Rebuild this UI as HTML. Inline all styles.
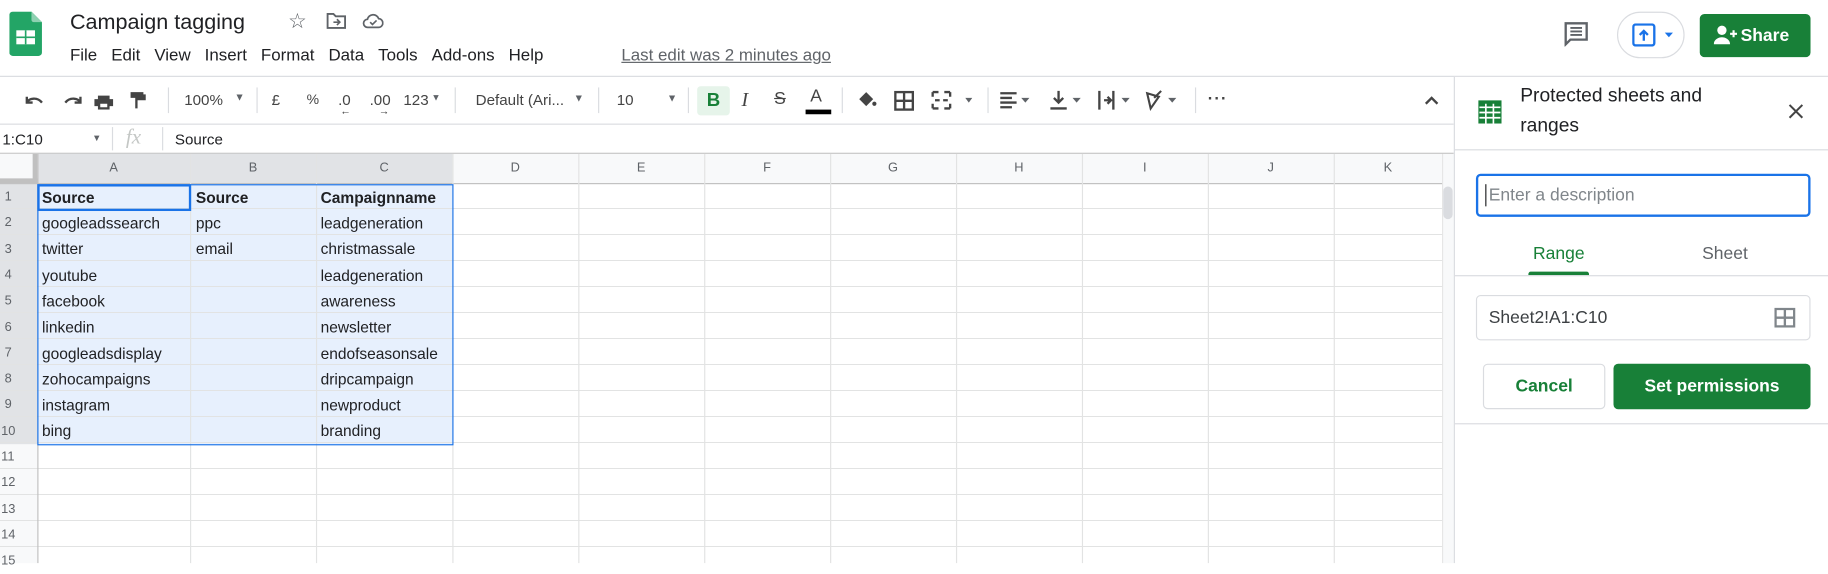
<!DOCTYPE html>
<html><head><meta charset="utf-8"><style>
*{box-sizing:border-box;margin:0;padding:0}
html,body{width:1828px;height:563px;overflow:hidden;background:#fff}
#w{position:absolute;left:0;top:0;width:1568px;height:483px;transform:scale(1.16582);transform-origin:0 0;font-family:"Liberation Sans",Arial,sans-serif;color:#202124}
.a{position:absolute}
.menu span{margin-right:12px}
.ti{color:#444;font-size:13px}
.vl{position:absolute;top:132px;width:1px;height:351px;background:#e2e3e3}
.c{position:absolute;font-size:13.3px;line-height:22px;white-space:nowrap}
.rn{position:absolute;left:0;width:32px;padding-left:4px;font-size:11px;color:#5f6368;line-height:22px}
.ch{position:absolute;top:132px;height:25px;line-height:25px;font-size:11px;color:#5f6368;text-align:center}
.sep{position:absolute;top:75px;width:1px;height:22px;background:#dadce0}
</style></head><body><div id="w">
<!-- logo -->
<svg class="a" style="left:8px;top:10px" width="28" height="38" viewBox="0 0 28 38"><path d="M3 0h16l9 9v26a3 3 0 0 1-3 3H3a3 3 0 0 1-3-3V3a3 3 0 0 1 3-3z" fill="#23a566"/><path d="M19 0l9 9h-7a2 2 0 0 1-2-2z" fill="#8ed1b1"/><rect x="6" y="16" width="16" height="12" fill="#fff"/><rect x="13.3" y="16" width="1.4" height="12" fill="#23a566"/><rect x="6" y="21.3" width="16" height="1.4" fill="#23a566"/></svg>
<div class="a" style="left:60px;top:8px;font-size:18.5px">Campaign tagging</div>
<div class="a" style="left:247px;top:8px;font-size:18px;color:#5f6368">☆</div>
<svg class="a" style="left:280px;top:11px" width="17" height="14" viewBox="0 0 17 14"><path d="M1 1h5l2 2h8v10H1z" fill="none" stroke="#5f6368" stroke-width="1.6"/><path d="M6 8h5M9 5.5l2.5 2.5L9 10.5" fill="none" stroke="#5f6368" stroke-width="1.4"/></svg>
<svg class="a" style="left:311px;top:11px" width="18" height="14" viewBox="0 0 18 14"><path d="M4.5 12.5a3.5 3.5 0 0 1-.3-7A5 5 0 0 1 13.8 5a3.7 3.7 0 0 1-.3 7.5z" fill="none" stroke="#5f6368" stroke-width="1.5"/><path d="M6.5 8l2 2 3.5-3.5" fill="none" stroke="#5f6368" stroke-width="1.4"/></svg>
<div class="a menu" style="left:60px;top:39px;font-size:14.5px;line-height:18px"><span>File</span><span>Edit</span><span>View</span><span>Insert</span><span>Format</span><span>Data</span><span>Tools</span><span>Add-ons</span><span>Help</span></div>
<div class="a" style="left:533px;top:39px;font-size:14.5px;line-height:18px;color:#5f6368;text-decoration:underline">Last edit was 2 minutes ago</div>
<!-- right top -->
<svg class="a" style="left:1341px;top:18px" width="22" height="22" viewBox="0 0 22 22"><path d="M2 2h18v14H6l-4 4z" fill="none" stroke="#5f6368" stroke-width="2"/><path d="M6 6h10M6 9h10M6 12h10" stroke="#5f6368" stroke-width="1.6"/></svg>
<div class="a" style="left:1387px;top:10px;width:58px;height:40px;border:1px solid #dadce0;border-radius:20px"></div>
<svg class="a" style="left:1400px;top:20px" width="36" height="20" viewBox="0 0 36 20"><rect x="1" y="1" width="18" height="18" rx="2" fill="none" stroke="#1a73e8" stroke-width="2"/><path d="M10 15V7M6.5 10L10 6.5 13.5 10" fill="none" stroke="#1a73e8" stroke-width="2"/><path d="M28 8h7l-3.5 4z" fill="#1a73e8"/></svg>
<div class="a" style="left:1458px;top:12px;width:95px;height:37px;background:#188038;border-radius:4px;color:#fff;font-size:15px;font-weight:bold;line-height:37px;padding-left:35px">Share</div>
<svg class="a" style="left:1470px;top:21px" width="20" height="18" viewBox="0 0 20 18"><circle cx="7" cy="5" r="4" fill="#fff"/><path d="M0 17c0-4 4-6 7-6s7 2 7 6z" fill="#fff"/><path d="M14 8h6M17 5v6" stroke="#fff" stroke-width="1.8"/></svg>
<div class="a" style="left:0;top:65px;width:1568px;height:1px;background:#dadce0"></div>
<!-- toolbar -->
<svg class="a" style="left:20px;top:78px" width="116" height="16" viewBox="0 0 116 16"><path d="M3 5v5h5M3 10c2-4 9-5 13 0" fill="none" stroke="#444" stroke-width="2"/><path d="M49 5v5h-5M49 10c-2-4-9-5-13 0" fill="none" stroke="#444" stroke-width="2"/><path d="M64 4h10v3H64z M61 7h16v6h-3v3H64v-3h-3z" fill="#444"/><rect x="66" y="11" width="6" height="3" fill="#fff"/><path d="M92 1h11v5H92z M103 3h2v5h-7v7h-2V6h7V5" fill="#444"/></svg>
<div class="sep" style="left:144px"></div>
<div class="a ti" style="left:158px;top:78px">100%</div><div class="a" style="left:201px;top:78px;font-size:9px;color:#5f6368">▼</div>
<div class="sep" style="left:220px"></div>
<div class="a ti" style="left:233px;top:78px">£</div>
<div class="a ti" style="left:263px;top:78px;font-size:12px">%</div>
<div class="a ti" style="left:290px;top:78px">.0</div><div class="a" style="left:292px;top:90px;font-size:9px;color:#444">←</div>
<div class="a ti" style="left:317px;top:78px">.00</div><div class="a" style="left:325px;top:90px;font-size:9px;color:#444">→</div>
<div class="a ti" style="left:346px;top:78px">123</div><div class="a" style="left:370px;top:79px;font-size:8px;color:#5f6368">▼</div>
<div class="sep" style="left:390px"></div>
<div class="a ti" style="left:408px;top:78px">Default (Ari...</div><div class="a" style="left:492px;top:79px;font-size:9px;color:#5f6368">▼</div>
<div class="sep" style="left:513px"></div>
<div class="a ti" style="left:529px;top:78px">10</div><div class="a" style="left:572px;top:79px;font-size:9px;color:#5f6368">▼</div>
<div class="sep" style="left:590px"></div>
<div class="a" style="left:598px;top:74px;width:28px;height:25px;background:#e6f4ea;border-radius:3px;color:#188038;font-weight:bold;font-size:16px;text-align:center;line-height:25px">B</div>
<div class="a" style="left:636px;top:76px;font-size:17px;font-style:italic;color:#444;font-family:'Liberation Serif',serif">I</div>
<div class="a" style="left:664px;top:76px;font-size:15px;color:#444;text-decoration:line-through">S</div>
<div class="a" style="left:695px;top:74px;font-size:15px;color:#444">A</div>
<div class="a" style="left:691px;top:94px;width:22px;height:4px;background:#000"></div>
<div class="sep" style="left:722px"></div>
<svg class="a" style="left:734px;top:76px" width="100" height="20" viewBox="0 0 100 20"><path d="M3 9l6-6 6 6-6 6z" fill="#444"/><circle cx="16" cy="13" r="1.8" fill="#444"/><rect x="34" y="3" width="15" height="15" fill="none" stroke="#444" stroke-width="2"/><path d="M41.5 3v15M34 10.5h15" stroke="#444" stroke-width="2"/><path d="M66 3h5M66 3v4M81 3h-5M81 3v4M66 17h5M66 17v-4M81 17h-5M81 17v-4M68 10h4M75 10h4" stroke="#444" stroke-width="2" fill="none"/><path d="M94 8h6l-3 4z" fill="#5f6368"/></svg>
<div class="sep" style="left:847px"></div>
<svg class="a" style="left:856px;top:76px" width="170" height="20" viewBox="0 0 170 20"><path d="M2 4h14M2 8h10M2 12h14M2 16h10" stroke="#444" stroke-width="2"/><path d="M20 8h7l-3.5 4z" fill="#5f6368"/><path d="M52 2v10M48 8l4 4 4-4M45 17h14" stroke="#444" stroke-width="2" fill="none"/><path d="M64 8h7l-3.5 4z" fill="#5f6368"/><path d="M87 2v16M99 2v16M91 10h6M94 7l3 3-3 3" stroke="#444" stroke-width="2" fill="none"/><path d="M106 8h7l-3.5 4z" fill="#5f6368"/><path d="M128 4l10 3-7 10z M134 8l6 -6" stroke="#444" stroke-width="1.8" fill="none"/><path d="M146 8h7l-3.5 4z" fill="#5f6368"/></svg>
<div class="sep" style="left:1025px"></div>
<div class="a" style="left:1036px;top:76px;font-size:14px;color:#444;font-weight:bold;letter-spacing:1px">···</div>
<svg class="a" style="left:1221px;top:81px" width="14" height="10" viewBox="0 0 14 10"><path d="M2 8l5-5 5 5" stroke="#444" stroke-width="2" fill="none"/></svg>
<div class="a" style="left:0;top:106px;width:1247px;height:1px;background:#dadce0"></div>
<!-- formula bar -->
<div class="a" style="left:2px;top:112px;font-size:13px">1:C10</div>
<div class="a" style="left:79px;top:114px;font-size:8px;color:#5f6368">▼</div>
<div class="a" style="left:96px;top:109px;width:1px;height:20px;background:#dadce0"></div>
<div class="a" style="left:108px;top:107px;font-size:18px;color:#c4c7c5;font-style:italic;font-family:'Liberation Serif',serif">fx</div>
<div class="a" style="left:139px;top:109px;width:1px;height:20px;background:#dadce0"></div>
<div class="a" style="left:150px;top:112px;font-size:13px">Source</div>
<div class="a" style="left:0;top:131px;width:1247px;height:1px;background:#c0c0c0"></div>
<!-- grid -->
<div class="a" style="left:0;top:132px;width:1237px;height:25px;background:#f8f9fa"></div>
<div class="a" style="left:32px;top:132px;width:356px;height:25px;background:#e1e3e6"></div>
<div class="a" style="left:0;top:157px;width:32px;height:326px;background:#f8f9fa"></div>
<div class="a" style="left:0;top:157px;width:32px;height:224px;background:#e1e3e6"></div>
<div class="a" style="left:0;top:132px;width:32px;height:25px;background:#f8f9fa;border-right:4px solid #c0c0c0;border-bottom:4px solid #c0c0c0"></div>
<div class="a" style="left:32px;top:158px;width:356px;height:223px;background:#e7f0fd"></div>
<div class="a" style="left:0;top:157px;width:1237px;height:326px;background:repeating-linear-gradient(to bottom,transparent 0,transparent 21.3px,#e2e3e3 21.3px,#e2e3e3 22.3px)"></div>
<div class="a" style="left:0;top:157px;width:1237px;height:1px;background:#c0c0c0"></div>
<div class="vl" style="left:32px;background:#c0c0c0"></div><div class="vl" style="left:163px"></div><div class="vl" style="left:271px"></div><div class="vl" style="left:388px"></div><div class="vl" style="left:496px"></div><div class="vl" style="left:604px"></div><div class="vl" style="left:712px"></div><div class="vl" style="left:820px"></div><div class="vl" style="left:928px"></div><div class="vl" style="left:1036px"></div><div class="vl" style="left:1144px"></div><div class="vl" style="left:1237px"></div>
<div class="a" style="left:32px;top:158px;width:357px;height:224px;border:1px solid #1a73e8"></div>
<div class="a" style="left:32px;top:158px;width:132px;height:23px;border:2px solid #1a73e8"></div>
<div class="a" style="left:1238px;top:132px;width:9px;height:351px;background:#f8f9fa"></div>
<div class="a" style="left:1238px;top:160px;width:8px;height:28px;background:#dadce0;border-radius:4px"></div>
<div class="ch" style="left:32px;width:131px">A</div><div class="ch" style="left:163px;width:108px">B</div><div class="ch" style="left:271px;width:117px">C</div><div class="ch" style="left:388px;width:108px">D</div><div class="ch" style="left:496px;width:108px">E</div><div class="ch" style="left:604px;width:108px">F</div><div class="ch" style="left:712px;width:108px">G</div><div class="ch" style="left:820px;width:108px">H</div><div class="ch" style="left:928px;width:108px">I</div><div class="ch" style="left:1036px;width:108px">J</div><div class="ch" style="left:1144px;width:93px">K</div>
<div class="rn" style="top:158px">1</div><div class="rn" style="top:180.3px">2</div><div class="rn" style="top:202.6px">3</div><div class="rn" style="top:224.9px">4</div><div class="rn" style="top:247.2px">5</div><div class="rn" style="top:269.5px">6</div><div class="rn" style="top:291.8px">7</div><div class="rn" style="top:314.1px">8</div><div class="rn" style="top:336.4px">9</div><div class="rn" style="top:358.7px;padding-left:1px">10</div><div class="rn" style="top:381px;padding-left:1px">11</div><div class="rn" style="top:403.3px;padding-left:1px">12</div><div class="rn" style="top:425.6px;padding-left:1px">13</div><div class="rn" style="top:447.9px;padding-left:1px">14</div><div class="rn" style="top:470.2px;padding-left:1px">15</div>
<div class="c" style="left:36px;top:159px;font-weight:bold">Source</div><div class="c" style="left:168px;top:159px;font-weight:bold">Source</div><div class="c" style="left:275px;top:159px;font-weight:bold">Campaignname</div>
<div class="c" style="left:36px;top:181px">googleadssearch</div><div class="c" style="left:168px;top:181px">ppc</div><div class="c" style="left:275px;top:181px">leadgeneration</div>
<div class="c" style="left:36px;top:203.3px">twitter</div><div class="c" style="left:168px;top:203.3px">email</div><div class="c" style="left:275px;top:203.3px">christmassale</div>
<div class="c" style="left:36px;top:225.6px">youtube</div><div class="c" style="left:275px;top:225.6px">leadgeneration</div>
<div class="c" style="left:36px;top:247.9px">facebook</div><div class="c" style="left:275px;top:247.9px">awareness</div>
<div class="c" style="left:36px;top:270.2px">linkedin</div><div class="c" style="left:275px;top:270.2px">newsletter</div>
<div class="c" style="left:36px;top:292.5px">googleadsdisplay</div><div class="c" style="left:275px;top:292.5px">endofseasonsale</div>
<div class="c" style="left:36px;top:314.8px">zohocampaigns</div><div class="c" style="left:275px;top:314.8px">dripcampaign</div>
<div class="c" style="left:36px;top:337.1px">instagram</div><div class="c" style="left:275px;top:337.1px">newproduct</div>
<div class="c" style="left:36px;top:359.4px">bing</div><div class="c" style="left:275px;top:359.4px">branding</div>
<!-- sidebar -->
<div class="a" style="left:1247px;top:66px;width:321px;height:417px;background:#fff;border-left:1px solid #dadce0"></div>
<svg class="a" style="left:1268px;top:86px" width="20" height="20" viewBox="0 0 20 20"><rect x="0" y="0" width="20" height="20" fill="#188038"/><path d="M1 6h18M1 10.5h18M1 15h18M6.5 3v17M13 3v17" stroke="#fff" stroke-width="1.4"/></svg>
<div class="a" style="left:1304px;top:69px;font-size:16.5px;line-height:26px">Protected sheets and<br>ranges</div>
<svg class="a" style="left:1534px;top:89px" width="13" height="13" viewBox="0 0 13 13"><path d="M1 1l11 11M12 1L1 12" stroke="#444" stroke-width="1.7"/></svg>
<div class="a" style="left:1248px;top:128px;width:320px;height:1px;background:#dadce0"></div>
<div class="a" style="left:1266px;top:149px;width:287px;height:37px;border:2px solid #1a73e8;border-radius:4px;font-size:15px;color:#80868b;line-height:33px;padding-left:9px">Enter a description</div>
<div class="a" style="left:1274px;top:158px;width:1px;height:19px;background:#202124"></div>
<div class="a" style="left:1315px;top:209px;font-size:15px;color:#188038">Range</div>
<div class="a" style="left:1460px;top:209px;font-size:15px;color:#5f6368">Sheet</div>
<div class="a" style="left:1311px;top:233px;width:52px;height:3px;background:#188038;border-radius:2px 2px 0 0"></div>
<div class="a" style="left:1248px;top:236px;width:320px;height:1px;background:#dadce0"></div>
<div class="a" style="left:1266px;top:253px;width:287px;height:39px;border:1px solid #dadce0;border-radius:4px;font-size:15px;color:#3c4043;line-height:37px;padding-left:10px">Sheet2!A1:C10</div>
<svg class="a" style="left:1522px;top:264px" width="18" height="17" viewBox="0 0 18 17"><rect x="1" y="1" width="16" height="15" fill="none" stroke="#80868b" stroke-width="2"/><path d="M9 1v15M1 8.5h16" stroke="#80868b" stroke-width="2"/></svg>
<div class="a" style="left:1272px;top:312px;width:105px;height:39px;border:1px solid #dadce0;border-radius:4px;font-size:15px;color:#188038;font-weight:bold;text-align:center;line-height:37px">Cancel</div>
<div class="a" style="left:1384px;top:312px;width:169px;height:39px;background:#188038;border-radius:4px;font-size:15px;color:#fff;font-weight:bold;text-align:center;line-height:39px">Set permissions</div>
<div class="a" style="left:1248px;top:363px;width:320px;height:1px;background:#dadce0"></div>
</div></body></html>
